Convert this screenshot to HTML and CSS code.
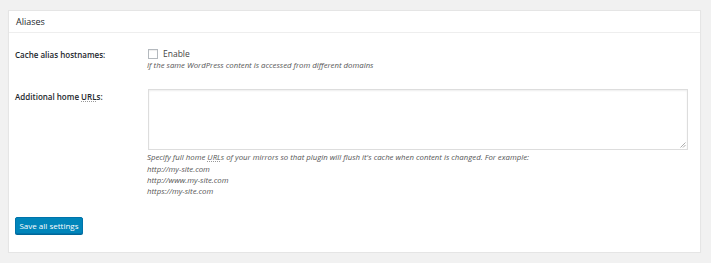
FILE: index.html
```html
<!DOCTYPE html>
<html>
<head>
<meta charset="utf-8">
<link rel="stylesheet" href="styles.css">
</head>
<body>
<div class="panel">
  <div class="panel-head">Aliases</div>
  <div class="panel-body">
    <div class="row row-cache">
      <div class="label">Cache alias hostnames:</div>
      <div class="field">
        <label class="check"><span class="box"></span>Enable</label>
        <div class="desc">If the same WordPress content is accessed from different domains</div>
      </div>
    </div>
    <div class="row row-urls">
      <div class="label">Additional home <abbr>URL</abbr>s:</div>
      <div class="field">
        <div class="textarea"><svg class="grip" width="6" height="6" viewBox="0 0 6 6"><path d="M5.5 0.5 L0.5 5.5 M5.5 3 L3 5.5" stroke="#999" stroke-width="0.8" fill="none"/></svg></div>
        <div class="desc">Specify full home <abbr>URL</abbr>s of your mirrors so that plugin will flush it's cache when content is changed. For example:<br>http://my-site.com<br>http://www.my-site.com<br>https://my-site.com</div>
      </div>
    </div>
    <div class="actions"><button class="btn">Save all settings</button></div>
  </div>
</div>
</body>
</html>
```
FILE: styles.css
```css
html, body {
  margin: 0;
  padding: 0;
  background: #f1f1f1;
  font-family: "Open Sans", "Noto Sans", sans-serif;
  color: #23282d;
}
body {
  padding: 10px 10px 0 8px;
}
.panel {
  width: 693px;
  height: 243px;
  box-sizing: border-box;
  background: #fff;
  border: 1px solid #e5e5e5;
  box-shadow: 0 1px 1px rgba(0,0,0,0.04);
}
.panel-head {
  height: 22px;
  box-sizing: border-box;
  border-bottom: 1px solid #eeeeee;
  padding: 5px 0 0 7px;
  font-size: 9px;
  line-height: 12px;
}
.panel-body {
  padding: 0 0 0 6px;
}
.row {
  display: flex;
}
.label {
  width: 133px;
  font-size: 8px;
  font-weight: 600;
  line-height: 12px;
}
.row-cache {
  padding-top: 15px;
}
.row-cache .label {
  padding-top: 1px;
}
.row-urls {
  padding-top: 18px;
}
.row-urls .label {
  padding-top: 2px;
}
abbr {
  text-decoration: underline dotted;
  text-decoration-color: #999;
}
.field {
  display: flex;
  flex-direction: column;
}
.check {
  display: flex;
  align-items: center;
  font-size: 8.5px;
  line-height: 12px;
  color: #444;
}
.box {
  width: 10px;
  height: 10px;
  border: 1px solid #b4b9be;
  box-sizing: border-box;
  margin-right: 5px;
  background: #fff;
  box-shadow: inset 0 1px 1px rgba(0,0,0,0.07);
}
.desc {
  font-size: 7.8px;
  font-style: italic;
  line-height: 11.3px;
  color: #555;
}
.row-cache .desc {
  margin-left: -1px;
}
.textarea {
  position: relative;
  width: 540px;
  height: 61px;
  box-sizing: border-box;
  border: 1px solid #dddddd;
  box-shadow: inset 0 1px 2px rgba(0,0,0,0.07);
  margin-bottom: 2px;
}
.grip {
  position: absolute;
  right: 1px;
  bottom: 1px;
}
.row-urls .desc {
  margin-left: -1px;
}
.actions {
  padding-top: 15px;
}
.btn {
  width: 68px;
  height: 17px;
  padding: 0;
  margin: 0;
  background: #0085ba;
  border: 1px solid #0073aa;
  border-radius: 2px;
  box-shadow: 0 1px 0 #006799;
  color: #fff;
  font-family: "Open Sans", "Noto Sans", sans-serif;
  font-size: 8px;
  line-height: 15px;
}
```
